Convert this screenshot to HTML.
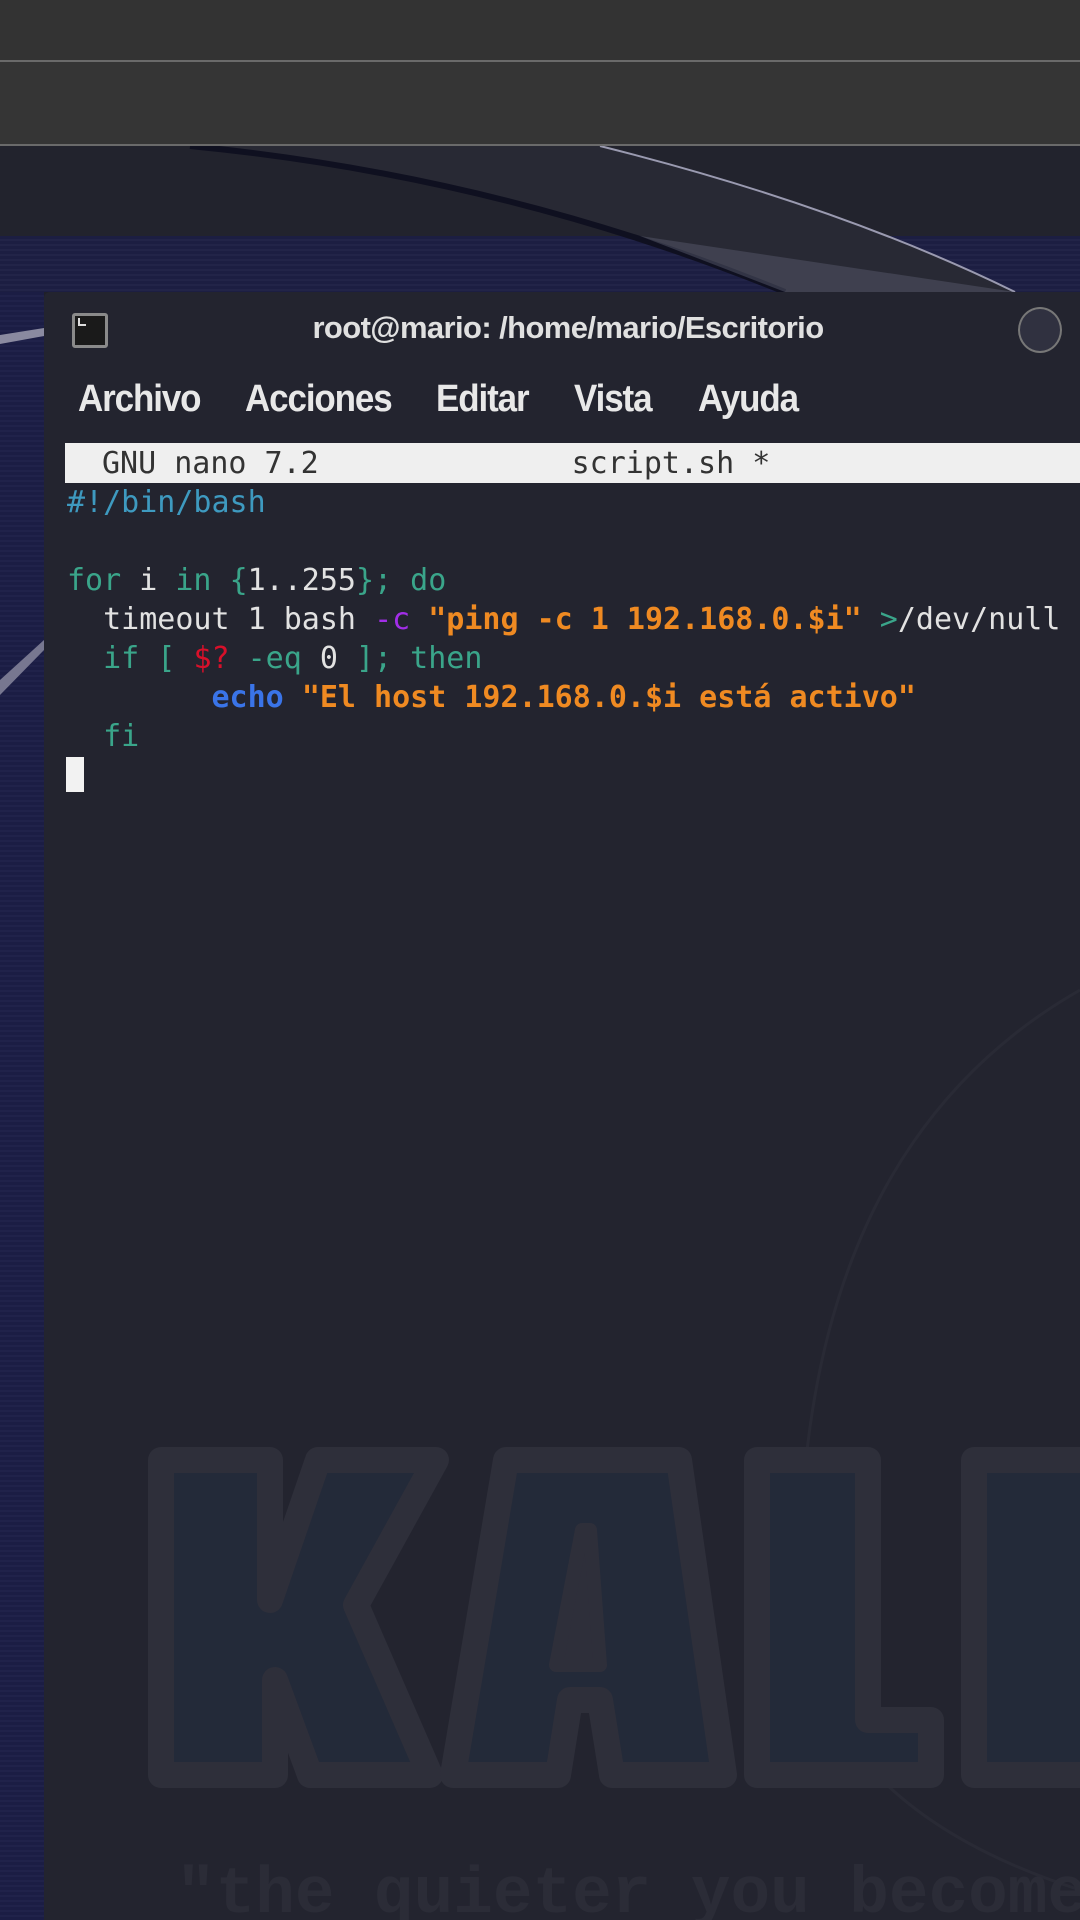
<!DOCTYPE html>
<html><head><meta charset="utf-8"><style>
*{margin:0;padding:0;box-sizing:border-box}
body{width:1080px;height:1920px;overflow:hidden;background:#1f2029;position:relative;font-family:"Liberation Sans",sans-serif}
.abs{position:absolute}
.mono{font-family:"DejaVu Sans Mono","Liberation Mono",monospace;font-size:30px;white-space:pre;line-height:39px}
.t{color:#3aa58a}.w{color:#e2e2e2}.o{color:#ef8a22;font-weight:bold}.p{color:#a22ee8}.r{color:#d8102a}.b{color:#3a74e8;font-weight:bold}.c{color:#3e9ac0}
.m{position:absolute;top:378px;color:#e8e8e8;font-size:38px;letter-spacing:-1.2px;font-weight:bold;transform:scaleX(0.92);transform-origin:left}
</style></head><body>
<div class="abs" style="left:0;top:0;width:1080px;height:60px;background:#333333"></div>
<div class="abs" style="left:0;top:60px;width:1080px;height:2px;background:#6a6a6a"></div>
<div class="abs" style="left:0;top:62px;width:1080px;height:82px;background:#353535"></div>
<div class="abs" style="left:0;top:144px;width:1080px;height:2px;background:#6a6a6a"></div>
<div class="abs" style="left:0;top:146px;width:1080px;height:90px;background:#22232d"></div>
<div class="abs" style="left:0;top:236px;width:1080px;height:56px;background:repeating-linear-gradient(#1c1e42 0 3px,#222448 3px 5px)"></div>
<div class="abs" style="left:0;top:292px;width:44px;height:1628px;background:repeating-linear-gradient(#1b1d44 0 3px,#20224a 3px 5px)"></div>
<svg class="abs" style="left:0;top:146px" width="1080" height="146">
<path d="M600 0 Q840 60 1015 146 L785 146 Q500 30 190 0Z" fill="#282934"/>
<path d="M190 0 Q500 30 785 146" stroke="#0f1020" stroke-width="6" fill="none"/>
<path d="M600 0 Q840 60 1015 146" stroke="#9a9ab0" stroke-width="2" fill="none"/>
<path d="M640 90 L1015 146 L785 146 Z" fill="#55576a" opacity="0.5"/>
</svg>
<svg class="abs" style="left:0;top:310px" width="44" height="400"><path d="M0 25 L44 18 L44 26 L0 34Z" fill="#8a8aa0"/><path d="M0 370 L44 330 L44 340 L0 385Z" fill="#777790"/></svg>
<!-- terminal -->
<div class="abs" style="left:44px;top:292px;width:1036px;height:1628px;background:#23242f;border-top-left-radius:6px"></div>
<svg class="abs" style="left:0;top:0" width="1080" height="1920">
<path d="M1080 990 Q800 1150 800 1580 Q800 1800 1080 1890" stroke="#292a35" stroke-width="3" fill="none"/>
<g fill="#232a39" stroke="#2e2f3a" stroke-width="26" stroke-linejoin="round">
<path d="M161 1460 L270 1460 L270 1600 L318 1460 L436 1460 L356 1605 L430 1775 L310 1775 L275 1680 L275 1775 L161 1775Z"/>
<path d="M506 1460 L679 1460 L724 1775 L612 1775 L600 1700 L570 1700 L558 1775 L453 1775Z"/>
<path d="M757 1460 L868 1460 L868 1720 L931 1720 L931 1775 L757 1775Z"/>
<path d="M974 1460 L1100 1460 L1100 1775 L974 1775Z"/>
</g>
<path d="M582 1530 L590 1530 L600 1665 L556 1665Z" fill="#2e2f3a" stroke="#2e2f3a" stroke-width="14" stroke-linejoin="round"/>
<text x="176" y="1912" font-family="Liberation Mono,monospace" font-weight="bold" font-size="66" fill="#2b2c37">"the quieter you become</text>
</svg>
<!-- title bar -->
<div class="abs" style="left:72px;top:313px;width:36px;height:35px;border:3px solid #8a8a8a;border-radius:3px;background:#1a1a1a"></div>
<div class="abs" style="left:78px;top:318px;width:8px;height:8px;border-left:2px solid #ddd;border-bottom:2px solid #ddd"></div>
<div class="abs" style="left:0;top:310px;width:1136px;text-align:center;color:#e0e0e0;font-size:31px;font-weight:bold;letter-spacing:-0.6px">root@mario: /home/mario/Escritorio</div>
<div class="abs" style="left:1018px;top:307px;width:44px;height:46px;border-radius:50%;background:#303140;border:2px solid #777"></div>
<!-- menu -->
<div class="m" style="left:78px">Archivo</div>
<div class="m" style="left:245px">Acciones</div>
<div class="m" style="left:436px">Editar</div>
<div class="m" style="left:574px">Vista</div>
<div class="m" style="left:698px">Ayuda</div>
<!-- nano -->
<div class="abs" style="left:65px;top:443px;width:1015px;height:40px;background:#efefef"></div>
<div class="abs mono" style="left:102px;top:444px;color:#333">GNU nano 7.2              script.sh *</div>
<div class="abs mono" style="left:67px;top:483px"><span class="c">#!/bin/bash</span>

<span class="t">for</span> <span class="w">i</span> <span class="t">in</span> <span class="t">{</span><span class="w">1..255</span><span class="t">}; do</span>
  <span class="w">timeout 1 bash</span> <span class="p">-c</span> <span class="o">"ping -c 1 192.168.0.$i"</span> <span class="t">&gt;</span><span class="w">/dev/null</span>
  <span class="t">if [</span> <span class="r">$?</span> <span class="t">-eq</span> <span class="w">0</span> <span class="t">]; then</span>
        <span class="b">echo</span> <span class="o">"El host 192.168.0.$i está activo"</span>
  <span class="t">fi</span></div>
<div class="abs" style="left:66px;top:757px;width:18px;height:35px;background:#f2f2f2"></div>
</body></html>
